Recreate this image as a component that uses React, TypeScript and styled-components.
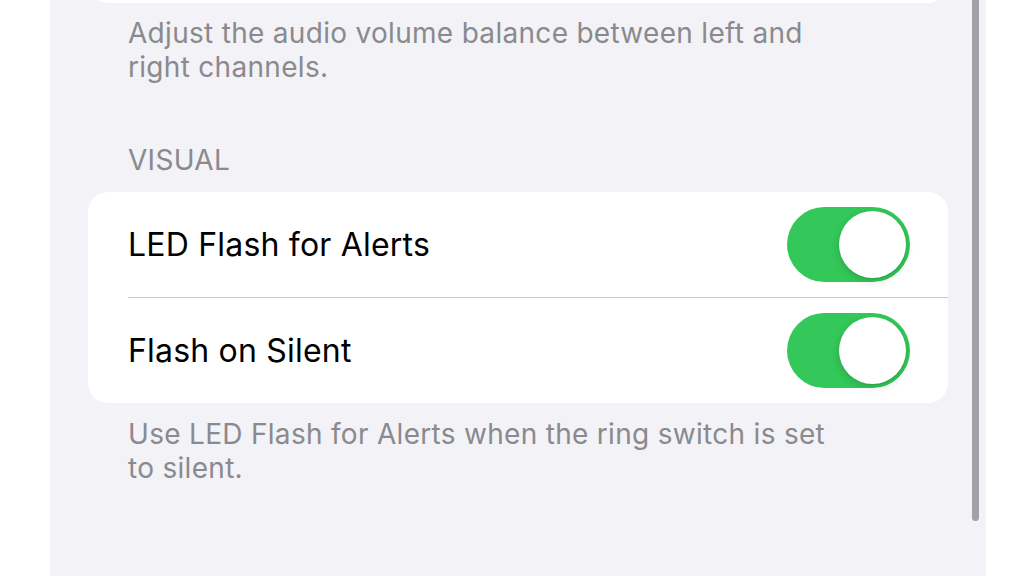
import React, { useState } from "react";
import styled, { createGlobalStyle } from "styled-components";

const colors = {
    page: "#ffffff",
    grouped: "#f2f2f7",
    card: "#ffffff",
    label: "#000000",
    secondary: "#8a8a8e",
    separator: "#c8c8cc",
    green: "#34c759",
    scroll: "#a1a1a6",
};

const GlobalStyle = createGlobalStyle`
    html, body {
        margin: 0;
        padding: 0;
        background: ${colors.page};
    }
    body {
        font-family: Inter, "Noto Sans", "Liberation Sans", sans-serif;
        -webkit-font-smoothing: antialiased;
    }
`;

const Page = styled.div`
    width: 1024px;
    height: 576px;
    display: flex;
    overflow: hidden;
    background: ${colors.page};
`;

const Panel = styled.main`
    position: relative;
    margin-left: 50px;
    width: 936px;
    height: 100%;
    background: ${colors.grouped};
    padding: 0 38px;
    box-sizing: border-box;
    overflow: hidden;
`;

const CardTail = styled.div`
    height: 24px;
    margin-top: -21px;
    background: ${colors.card};
    border-radius: 0 0 20px 20px;
`;

const Footnote = styled.p<{ $top: number }>`
    margin: ${(p) => p.$top}px 0 0;
    padding: 0 100px 0 40px;
    font-size: 28px;
    line-height: 34px;
    letter-spacing: 0.3px;
    color: ${colors.secondary};
`;

const SectionHeader = styled.h3`
    margin: 59px 0 0;
    padding: 0 40px;
    font-size: 28px;
    line-height: 34px;
    font-weight: 400;
    letter-spacing: 0.3px;
    text-transform: uppercase;
    color: ${colors.secondary};
`;

const Card = styled.section`
    margin-top: 15px;
    background: ${colors.card};
    border-radius: 20px;
    overflow: hidden;
`;

const Row = styled.div`
    display: flex;
    align-items: center;
    justify-content: space-between;
    height: 105px;
    padding: 0 38px 0 40px;
    box-sizing: border-box;
`;

const Divider = styled.div`
    height: 1px;
    margin-left: 40px;
    background: ${colors.separator};
`;

const RowLabel = styled.span`
    font-size: 32px;
    letter-spacing: 0.2px;
    color: ${colors.label};
`;

const Switch = styled.button<{ $on: boolean }>`
    display: flex;
    align-items: center;
    justify-content: ${(p) => (p.$on ? "flex-end" : "flex-start")};
    width: 123px;
    height: 75px;
    padding: 0 4px;
    border: none;
    border-radius: 38px;
    background: ${(p) => (p.$on ? colors.green : "#e9e9ea")};
    cursor: pointer;
    box-sizing: border-box;
`;

const Knob = styled.span`
    width: 67px;
    height: 67px;
    border-radius: 50%;
    background: #fff;
    box-shadow: 0 3px 8px rgba(0, 0, 0, 0.15), 0 1px 1px rgba(0, 0, 0, 0.08);
`;

const ScrollThumb = styled.div`
    position: absolute;
    top: -12px;
    right: 7px;
    width: 7px;
    height: 533px;
    border-radius: 4px;
    background: ${colors.scroll};
`;

const ToggleRow: React.FC<{ label: string }> = ({ label }) => {
    const [on, setOn] = useState(true);
    return (
        <Row>
            <RowLabel>{label}</RowLabel>
            <Switch $on={on} onClick={() => setOn(!on)} aria-pressed={on}>
                <Knob />
            </Switch>
        </Row>
    );
};

const App: React.FC = () => {
    return (
        <Page>
            <GlobalStyle />
            <Panel>
                <CardTail />
                <Footnote $top={13}>
                    Adjust the audio volume balance between left and right channels.
                </Footnote>
                <SectionHeader>Visual</SectionHeader>
                <Card>
                    <ToggleRow label="LED Flash for Alerts" />
                    <Divider />
                    <ToggleRow label="Flash on Silent" />
                </Card>
                <Footnote $top={14}>
                    Use LED Flash for Alerts when the ring switch is set to silent.
                </Footnote>
                <ScrollThumb />
            </Panel>
        </Page>
    );
};

export default App;
